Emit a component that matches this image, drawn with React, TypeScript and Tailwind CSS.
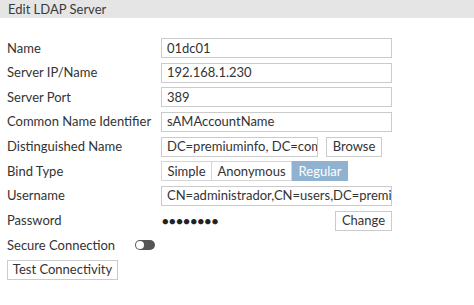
const font = { fontFamily: "Lato, 'Noto Sans', sans-serif" };

const Row = ({ label, children }: { label: string; children?: React.ReactNode }) => (
  <div className="flex items-center h-[24.67px]">
    <div className="w-[154px] shrink-0">{label}</div>
    {children}
  </div>
);

const TextBox = ({ value, width = "w-[231px]" }: { value: string; width?: string }) => (
  <div
    className={`${width} h-[20px] border border-[#cbcbcb] bg-white px-[5px] flex items-center overflow-hidden whitespace-nowrap`}
  >
    {value}
  </div>
);

export default function App() {
  return (
    <div className="w-[474px] h-[305px] bg-white text-[13px] text-[#333333] leading-none" style={font}>
      <div className="h-[18px] bg-[#e5e5e5] flex items-center pl-[8px] text-[#3a3a3a]">
        Edit LDAP Server
      </div>

      <div className="pl-[7px] pt-[17.7px]">
        <Row label="Name">
          <TextBox value="01dc01" />
        </Row>
        <Row label="Server IP/Name">
          <TextBox value="192.168.1.230" />
        </Row>
        <Row label="Server Port">
          <TextBox value="389" />
        </Row>
        <Row label="Common Name Identifier">
          <TextBox value="sAMAccountName" />
        </Row>
        <Row label="Distinguished Name">
          <TextBox value="DC=premiuminfo, DC=com" width="w-[157px]" />
          <button className="ml-[8px] w-[56px] h-[20px] border border-[#cbcbcb] bg-white flex items-center justify-center">
            Browse
          </button>
        </Row>
        <Row label="Bind Type">
          <div className="flex h-[20px]">
            <div className="w-[51px] border border-[#d6d6d6] bg-white flex items-center justify-center">
              Simple
            </div>
            <div className="w-[80px] border-y border-r border-[#d6d6d6] bg-white flex items-center justify-center">
              Anonymous
            </div>
            <div className="w-[56px] bg-[#8fb2d1] text-white flex items-center justify-center">
              Regular
            </div>
          </div>
        </Row>
        <Row label="Username">
          <TextBox value="CN=administrador,CN=users,DC=premiuminfo,DC=com" />
        </Row>
        <Row label="Password">
          <div className="w-[231px] flex items-center justify-between">
            <span className="pl-[1px] text-[11px] tracking-[0.5px] text-[#222]">●●●●●●●●</span>
            <button className="w-[57px] h-[20px] border border-[#cbcbcb] bg-white flex items-center justify-center">
              Change
            </button>
          </div>
        </Row>
        <div className="flex items-center h-[24.67px]">
          <div className="w-[128px] shrink-0">Secure Connection</div>
          <div className="w-[20px] h-[10px] rounded-full bg-[#555555] flex items-center pl-[1px]">
            <div className="w-[8px] h-[8px] rounded-full bg-white" />
          </div>
        </div>
        <div className="flex items-center h-[24.67px]">
          <button className="w-[111px] h-[20px] border border-[#cbcbcb] bg-white flex items-center justify-center">
            Test Connectivity
          </button>
        </div>
      </div>
    </div>
  );
}
